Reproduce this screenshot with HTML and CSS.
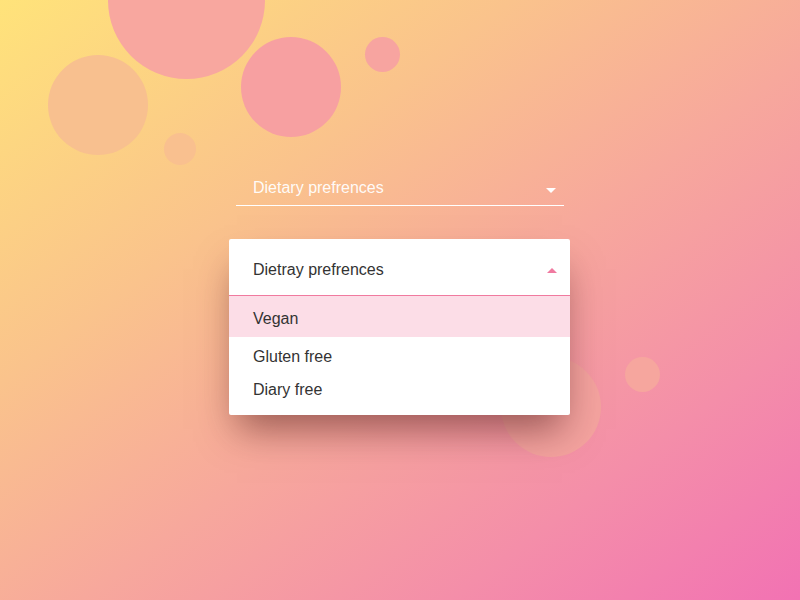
FILE: index.html
```html
<!DOCTYPE html>
<html lang="en">
<head>
<meta charset="utf-8">
<title>Dietary preferences</title>
<link rel="stylesheet" href="styles.css">
</head>
<body>
<div class="backdrop" aria-hidden="true">
  <span class="bubble b1"></span>
  <span class="bubble b2"></span>
  <span class="bubble b3"></span>
  <span class="bubble b4"></span>
  <span class="bubble b5"></span>
  <span class="bubble b6"></span>
  <span class="bubble b7"></span>
</div>
<main class="stage">
  <div class="select">
    <span class="select-label">Dietary prefrences</span>
    <svg class="caret caret-down" width="10" height="5" viewBox="0 0 10 5"><path d="M0 0H10L5 5Z" fill="#fff"/></svg>
  </div>
  <div class="dropdown">
    <div class="dropdown-head">
      <span class="head-label">Dietray prefrences</span>
      <svg class="caret caret-up" width="10" height="5" viewBox="0 0 10 5"><path d="M0 5H10L5 0Z" fill="#f07aa0"/></svg>
    </div>
    <ul class="options">
      <li class="option active">Vegan</li>
      <li class="option">Gluten free</li>
      <li class="option last">Diary free</li>
    </ul>
  </div>
</main>
</body>
</html>
```
FILE: styles.css
```css
html, body {
  margin: 0;
  padding: 0;
}
body {
  width: 800px;
  height: 600px;
  overflow: hidden;
  position: relative;
  font-family: "Liberation Sans", Arial, sans-serif;
  font-size: 16px;
  background: linear-gradient(to bottom right, #ffe37a 0%, #fac38c 32%, #f7a89c 55%, #f48ea9 78%, #f272b3 100%);
}
.backdrop {
  position: absolute;
  inset: 0;
}
.bubble {
  position: absolute;
  border-radius: 50%;
}
.b1 { left: 108px; top: -78px; width: 157px; height: 157px; background: #f8a79f; }
.b2 { left: 48px; top: 55px; width: 100px; height: 100px; background: #f8c08f; }
.b3 { left: 164px; top: 133px; width: 32px; height: 32px; background: #f9c08f; }
.b4 { left: 241px; top: 37px; width: 100px; height: 100px; background: #f7a0a1; }
.b5 { left: 365px; top: 37px; width: 35px; height: 35px; background: #f7a4a0; }
.b6 { left: 501px; top: 357px; width: 100px; height: 100px; background: #f4a39f; }
.b7 { left: 625px; top: 357px; width: 35px; height: 35px; background: #f6a69e; }

.stage {
  position: relative;
  display: flex;
  flex-direction: column;
  align-items: center;
  padding-top: 178px;
}
.select {
  width: 328px;
  box-sizing: border-box;
  display: flex;
  align-items: center;
  justify-content: space-between;
  padding: 0 8px 7px 17px;
  border-bottom: 1px solid #ffffff;
  line-height: 20px;
  color: rgba(255, 255, 255, 0.95);
}
.caret { display: block; }
.caret-down { margin-top: 4px; }
.dropdown {
  margin-top: 33px;
  margin-left: -1px;
  width: 341px;
  background: #ffffff;
  border-radius: 2px;
  box-shadow: 0 22px 36px -8px rgba(80, 25, 25, 0.55);
}
.dropdown-head {
  display: flex;
  align-items: center;
  justify-content: space-between;
  padding: 21px 13px 15px 24px;
  line-height: 20px;
  color: #333333;
  border-bottom: 1px solid #f07a9f;
}
.caret-up { margin-top: 0; }
.options {
  list-style: none;
  margin: 0;
  padding: 0 0 11px;
}
.option {
  padding: 10px 24px 4px;
  line-height: 20px;
  color: #333333;
}
.option.active {
  padding: 13px 24px 8px;
  background: #fcdde7;
}
.option.last {
  padding-top: 9px;
}
```
